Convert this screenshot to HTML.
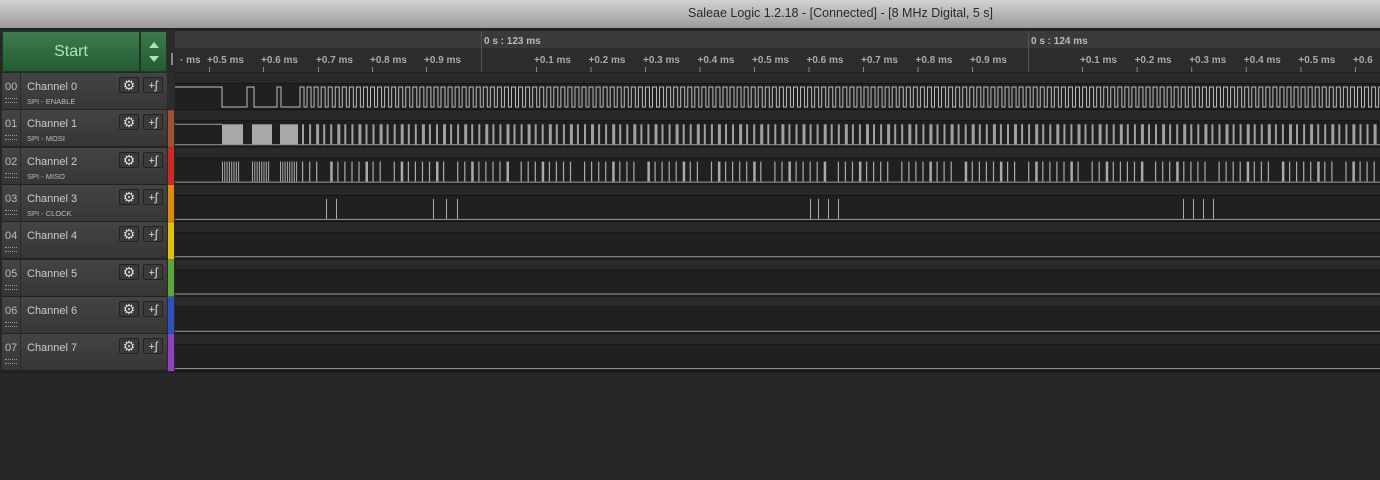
<!DOCTYPE html>
<html><head><meta charset="utf-8"><style>
*{margin:0;padding:0;box-sizing:border-box}
body{width:1380px;height:480px;overflow:hidden;background:#272727;font-family:"Liberation Sans",sans-serif;position:relative}
#title{position:absolute;left:0;top:0;width:1380px;height:30px;background:linear-gradient(#d2d2d2,#9a9a9a);border-bottom:2px solid #222}
#title span{position:absolute;left:688px;top:6px;font-size:12.5px;color:#2a2a2a}
#start{position:absolute;left:2px;top:31px;width:138px;height:41px;background:linear-gradient(#3d7d4e,#245a33);border:1px solid #1b3a22;color:#a8e6b0;font-size:16px;text-align:center;line-height:40px}
#arr{position:absolute;left:140px;top:31px;width:27px;height:41px;background:linear-gradient(#3b7a4b,#245a33);border:1px solid #1b3a22}
.row{position:absolute;left:2px;width:165px;height:37px;background:linear-gradient(#444,#363636);border-bottom:1px solid #222}
.num{position:absolute;left:0;top:0;width:19px;height:36px;border-right:1px solid #2a2a2a;color:#bbb;font-size:11px;padding:8px 0 0 3px}
.grip{position:absolute;left:3px;top:25px;width:12px;height:5px;border-top:1px dotted #999;border-bottom:1px dotted #999}
.nm{position:absolute;left:25px;top:8px;color:#ccc;font-size:11px}
.sub{position:absolute;left:25px;top:24px;color:#bbb;font-size:7.5px}
.btn{position:absolute;top:4px;width:20px;height:16px;border:1px solid #222;border-radius:2px;background:#3a3a3a;color:#ddd;font-size:11px;text-align:center;line-height:14px}
.g{font-size:14px}
</style></head><body>
<div id="title"><span>Saleae Logic 1.2.18 - [Connected] - [8 MHz Digital, 5 s]</span></div>
<div id="start">Start</div>
<div id="arr"><svg width="27" height="41"><path d="M8 16 L13 10 L18 16Z M8 24 L18 24 L13 30Z" fill="#a8e6b0"/></svg></div>
<div id="rows"></div>
<svg id="w" width="1380" height="480" style="position:absolute;left:0;top:0"></svg>
<script>
var names=["SPI - ENABLE","SPI - MOSI","SPI - MISO","SPI - CLOCK","","","",""];
var cols=["#2c2c2c","#a0522d","#d02a20","#e08a10","#e0c010","#5aa83a","#3050c0","#9040c0"];
var h="";
for(var i=0;i<8;i++){var T=73+i*37.3;
h+='<div class="row" style="top:'+T+'px"><div class="num">0'+i+'</div><div class="grip"></div><div class="nm">Channel '+i+'</div>'+(names[i]?'<div class="sub">'+names[i]+'</div>':'')+
'<div class="btn g" style="left:117px">&#9881;</div><div class="btn" style="left:141px">+<span style="font-size:12px">ʃ</span></div></div>';}
document.getElementById('rows').innerHTML=h;
var s='';
s+='<rect x="167" y="31" width="1213" height="341" fill="#202020"/>';
s+='<rect x="175" y="31" width="1205" height="17" fill="#3a3a3a"/><rect x="175" y="48" width="1205" height="24" fill="#2c2c2c"/>';
s+='<rect x="167" y="31" width="8" height="341" fill="#2a2a2a"/>';
s+='<line x1="481.5" y1="31" x2="481.5" y2="72" stroke="#555"/><line x1="1028.5" y1="31" x2="1028.5" y2="72" stroke="#555"/>';
s+='<text x="484" y="44" fill="#bbb" font-size="10" font-weight="bold" font-family="Liberation Sans">0 s : 123 ms</text>';
s+='<text x="1031" y="44" fill="#bbb" font-size="10" font-weight="bold" font-family="Liberation Sans">0 s : 124 ms</text>';
var L=[[180,"· ms"]];
[[207,5],[261,6],[316,7],[370,8],[424,9]].forEach(function(a){L.push([a[0],"+0."+a[1]+" ms"])});
for(var k=1;k<=9;k++)L.push([534+(k-1)*54.5,"+0."+k+" ms"]);
for(var k=1;k<=6;k++)L.push([1080+(k-1)*54.6,"+0."+k+(k==6?"":" ms")]);
L.forEach(function(a){s+='<text x="'+a[0]+'" y="63" fill="#aaa" font-size="10" font-weight="bold" font-family="Liberation Sans">'+a[1]+'</text>';if(a[1][0]=="+")s+='<line x1="'+(a[0]+2.5)+'" y1="67" x2="'+(a[0]+2.5)+'" y2="72" stroke="#888"/>';});
s+='<rect x="171" y="53" width="2" height="12" fill="#888"/>';
for(var i=0;i<8;i++){var T=73+i*37.3;
s+='<rect x="168" y="'+T+'" width="6" height="37" fill="'+cols[i]+'"/>';
s+='<rect x="175" y="'+T+'" width="1205" height="10" fill="#292929"/>';
s+='<line x1="175" y1="'+(T+10.5)+'" x2="1380" y2="'+(T+10.5)+'" stroke="#151515"/>';
s+='<line x1="175" y1="'+(T+36.5)+'" x2="1380" y2="'+(T+36.5)+'" stroke="#151515"/>';}
function Y(i,hi){var T=73+i*37.3;return hi?T+14:T+34;}
var p='M175 '+Y(0,1)+' H222 V'+Y(0,0)+' H247 V'+Y(0,1)+' H254 V'+Y(0,0)+' H277 V'+Y(0,1)+' H281 V'+Y(0,0)+' H300';
for(var x=300;x<1380;x+=7.05){p+=' V'+Y(0,1)+' H'+(x+4)+' V'+Y(0,0)+' H'+(x+7.05);}
s+='<path d="'+p+'" fill="none" stroke="#bbb" stroke-width="1"/>';
var y1=Y(1,1),y0=Y(1,0);
s+='<line x1="175" y1="'+(y0+.5)+'" x2="1380" y2="'+(y0+.5)+'" stroke="#999"/><line x1="175" y1="'+(y1)+'" x2="222" y2="'+y1+'" stroke="#999"/>';
[[222,21],[252,20],[280,18]].forEach(function(b){s+='<rect x="'+b[0]+'" y="'+y1+'" width="'+b[1]+'" height="'+(y0-y1)+'" fill="#a8a8a8"/>';});
var n=0;for(var x=302;x<1380;x+=7.05){n++;s+='<rect x="'+x.toFixed(1)+'" y="'+y1+'" width="'+(n%3==0?3:2)+'" height="'+(y0-y1)+'" fill="#a0a0a0"/>';}
y1=Y(2,1);y0=Y(2,0);
s+='<line x1="175" y1="'+(y0+.5)+'" x2="1380" y2="'+(y0+.5)+'" stroke="#999"/>';
[222,252,280].forEach(function(b){for(var j=0;j<8;j++)s+='<rect x="'+(b+j*2.3)+'" y="'+y1+'" width="1" height="'+(y0-y1)+'" fill="#aaa"/>';});
n=0;for(var x=302;x<1380;x+=7.05){n++;if(n%9==4)continue;s+='<rect x="'+x.toFixed(1)+'" y="'+y1+'" width="'+(n%5==0?2.5:1.2)+'" height="'+(y0-y1)+'" fill="#aaa"/>';}
y1=Y(3,1);y0=Y(3,0);
s+='<line x1="175" y1="'+(y0+.5)+'" x2="1380" y2="'+(y0+.5)+'" stroke="#999"/>';
[326,336,433,446,457,810,818,828,838,1183,1193,1203,1213].forEach(function(x){s+='<line x1="'+x+'.5" y1="'+y1+'" x2="'+x+'.5" y2="'+y0+'" stroke="#aaa"/>';});
for(var i=4;i<8;i++){var yy=Y(i,0)+.5;s+='<line x1="175" y1="'+yy+'" x2="1380" y2="'+yy+'" stroke="#999"/>';}
s+='<rect x="0" y="372" width="1380" height="108" fill="#272727"/><line x1="0" y1="372" x2="1380" y2="372" stroke="#1a1a1a"/>';
document.getElementById('w').innerHTML=s;
</script>
</body></html>
